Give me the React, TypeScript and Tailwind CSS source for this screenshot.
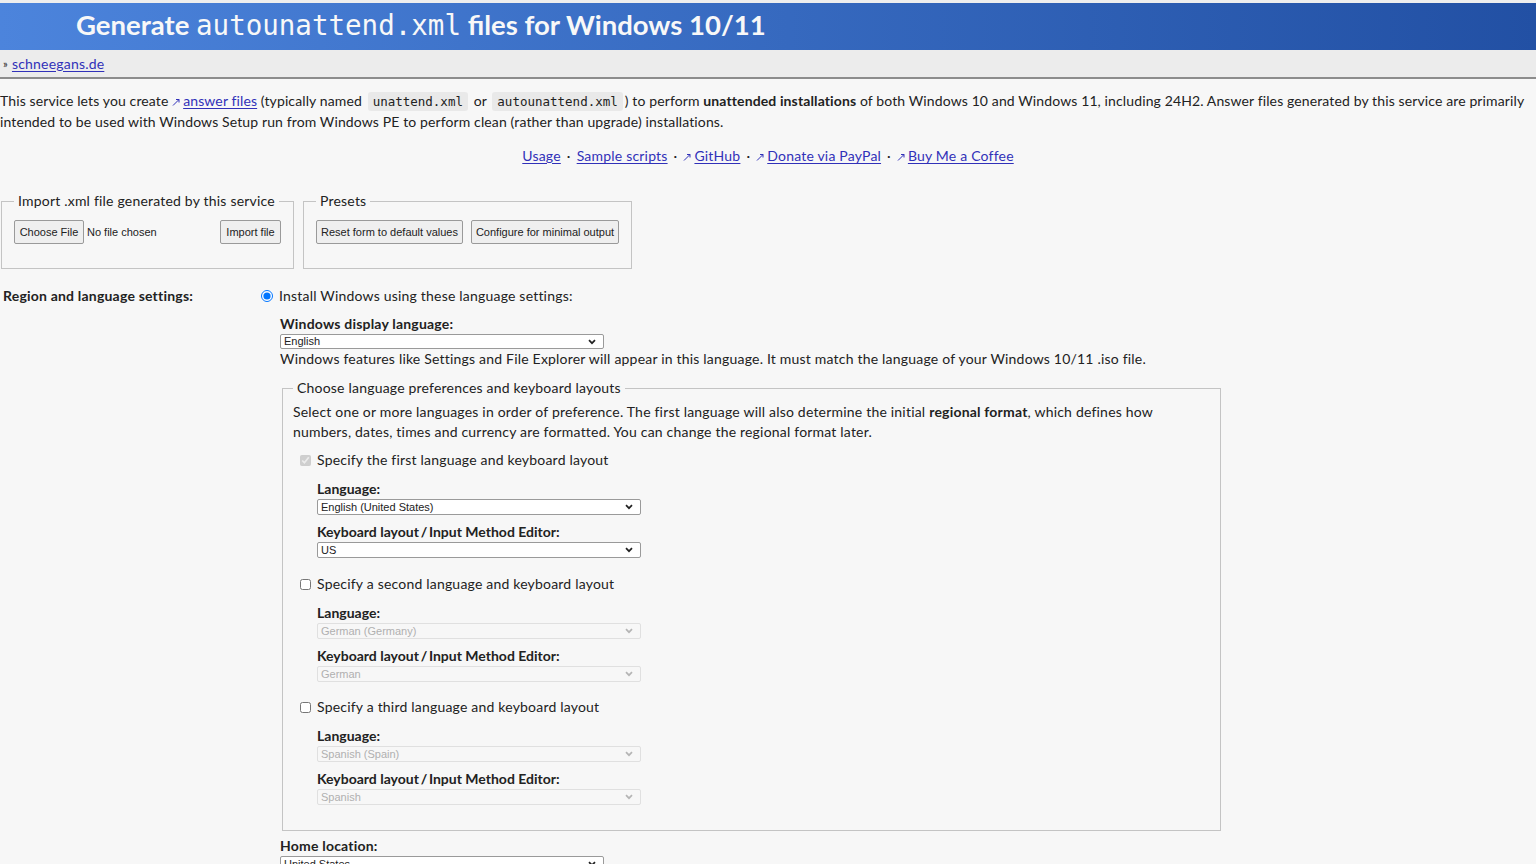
import React from "react";

const LINK = "text-[#3131b9] underline underline-offset-2";

const Ext = () => (
  <svg
    width="8"
    height="8"
    viewBox="0 0 8 8"
    fill="none"
    stroke="currentColor"
    strokeWidth="1"
    className="inline-block mr-[3px] align-baseline"
  >
    <path d="M1 7.5L7 1.5M4 1.5H7V4.5" />
  </svg>
);

const Code = ({ children }: { children: React.ReactNode }) => (
  <code className="mx-[2px] rounded-[3px] bg-[#e9e9e9] px-[5px] py-[2px] font-['DejaVu_Sans_Mono',monospace] text-[12.5px] tracking-normal">
    {children}
  </code>
);

const Btn = ({ children, w }: { children: React.ReactNode; w: string }) => (
  <button
    className={`h-6 ${w} rounded-[2px] border border-[#9a9a9a] bg-[#efefef] font-['Liberation_Sans',Arial,sans-serif] text-[11px] tracking-normal text-[#222]`}
  >
    {children}
  </button>
);

const Select = ({
  value,
  disabled,
  h = "h-4",
}: {
  value: string;
  disabled?: boolean;
  h?: string;
}) => (
  <div
    className={`flex ${h} w-[324px] items-center justify-between rounded-[2px] border pl-[3px] pr-[7px] font-['Liberation_Sans',Arial,sans-serif] text-[11px] leading-none tracking-normal ${
      disabled
        ? "border-[#e0e0e0] bg-[#f7f7f7] text-[#b0b0b0]"
        : "border-[#9a9a9a] bg-white text-[#222]"
    }`}
  >
    <span>{value}</span>
    <svg width="8" height="6" viewBox="0 0 8 6" fill="none">
      <path
        d="M1 1.2L4 4.2L7 1.2"
        stroke={disabled ? "#b5b5b5" : "#222"}
        strokeWidth="1.7"
      />
    </svg>
  </div>
);

const Field = ({
  label,
  value,
  disabled,
  first,
}: {
  label: string;
  value: string;
  disabled?: boolean;
  first?: boolean;
}) => (
  <div className={first ? "mt-[9px]" : "mt-[7px]"}>
    <div className="font-bold leading-5 tracking-normal">{label}</div>
    <Select value={value} disabled={disabled} />
  </div>
);

const LangBlock = ({
  title,
  lang,
  kb,
  checked,
  disabled,
  first,
  mt,
}: {
  title: string;
  lang: string;
  kb: string;
  checked?: boolean;
  disabled?: boolean;
  first?: boolean;
  mt: string;
}) => (
  <div className={mt}>
    <label className="flex items-center pl-[7px] leading-5">
      <input
        type="checkbox"
        defaultChecked={checked}
        disabled={first}
        className="mr-[6px] h-[11px] w-[11px]"
      />
      {title}
    </label>
    <div className="pl-[24px]">
      <Field label="Language:" value={lang} disabled={disabled} first />
      <Field
        label={"Keyboard layout\u2009/\u2009Input Method Editor:"}
        value={kb}
        disabled={disabled}
      />
    </div>
  </div>
);

export default function App() {
  return (
    <div className="min-h-screen bg-[#f7f7f7] font-['Lato','Liberation_Sans',sans-serif] text-[14px] leading-5 tracking-[0.2px] text-[#222]">
      <header className="bg-[#eeeeee] pt-[3px]">
        <div className="flex h-[47px] items-center bg-linear-to-r from-[#4c84dc] to-[#2250a4] pb-[3px] pl-[76px]">
          <h1 className="text-[27.5px] font-bold leading-none tracking-normal text-[#f8f8f8]">
            Generate{" "}
            <span className="font-['DejaVu_Sans_Mono',monospace] font-normal">
              autounattend.xml
            </span>{" "}
            files for Windows 10/11
          </h1>
        </div>
        <div className="flex h-[29px] items-center border-b-2 border-[#8c8c8c] bg-[#ececec] pl-[3px] text-[14px]">
          <span className="mr-[4px] text-[11px]">»</span>
          <a className={LINK}>schneegans.de</a>
        </div>
      </header>

      <p className="mt-3 tracking-[0.12px]">
        <span className="whitespace-nowrap">
          This service lets you create{" "}
          <a className={LINK}>
            <Ext />
            answer files
          </a>{" "}
          (typically named <Code>unattend.xml</Code> or{" "}
          <Code>autounattend.xml</Code>) to perform{" "}
          <b>unattended installations</b> of both Windows 10 and Windows 11,
          including 24H2. Answer files generated by this service are primarily
        </span>
        <br />
        intended to be used with Windows Setup run from Windows PE to perform
        clean (rather than upgrade) installations.
      </p>

      <nav className="mt-[14px] flex justify-center gap-[6px]">
        <a className={LINK}>Usage</a>
        <span>·</span>
        <a className={LINK}>Sample scripts</a>
        <span>·</span>
        <a className={LINK}>
          <Ext />
          GitHub
        </a>
        <span>·</span>
        <a className={LINK}>
          <Ext />
          Donate via PayPal
        </a>
        <span>·</span>
        <a className={LINK}>
          <Ext />
          Buy Me a Coffee
        </a>
      </nav>

      <div className="mt-[25px] flex gap-[9px] pl-px">
        <fieldset className="w-[293px] border border-[#c4c4c4] px-3 pt-[9px] pb-[24px]">
          <legend className="px-[4px]">
            Import .xml file generated by this service
          </legend>
          <div className="flex items-center">
            <Btn w="w-[70px]">Choose File</Btn>
            <span className="ml-[3px] font-['Liberation_Sans',Arial,sans-serif] text-[11px] tracking-normal">
              No file chosen
            </span>
            <span className="ml-auto">
              <Btn w="w-[61px]">Import file</Btn>
            </span>
          </div>
        </fieldset>
        <fieldset className="w-[327px] border border-[#c4c4c4] px-3 pt-[9px] pb-[24px]">
          <legend className="px-[4px]">Presets</legend>
          <div className="flex gap-2">
            <Btn w="w-[147px]">Reset form to default values</Btn>
            <Btn w="w-[148px]">Configure for minimal output</Btn>
          </div>
        </fieldset>
      </div>

      <div className="mt-[17px] flex">
        <div className="w-[261px] shrink-0 pl-[3px] font-bold">
          Region and language settings:
        </div>
        <div>
          <label className="flex items-center">
            <input
              type="radio"
              defaultChecked
              className="mr-[6px] h-[12px] w-[12px]"
            />
            Install Windows using these language settings:
          </label>
          <div className="pl-[19px]">
            <div className="mt-2 font-bold">Windows display language:</div>
            <Select value="English" h="h-[15px]" />
            <div>
              Windows features like Settings and File Explorer will appear in
              this language. It must match the language of your Windows 10/11
              .iso file.
            </div>

            <fieldset className="mt-[9px] ml-[2px] w-[939px] border border-[#c4c4c4] pl-[10px] pr-4 pb-[25px]">
              <legend className="px-[4px]">
                Choose language preferences and keyboard layouts
              </legend>
              <p className="mt-1">
                Select one or more languages in order of preference. The first
                language will also determine the initial{" "}
                <b>regional format</b>, which defines how
                <br />
                numbers, dates, times and currency are formatted. You can change
                the regional format later.
              </p>
              <LangBlock
                first
                checked
                mt="mt-2"
                title="Specify the first language and keyboard layout"
                lang="English (United States)"
                kb="US"
              />
              <LangBlock
                disabled
                mt="mt-4"
                title="Specify a second language and keyboard layout"
                lang="German (Germany)"
                kb="German"
              />
              <LangBlock
                disabled
                mt="mt-[15px]"
                title="Specify a third language and keyboard layout"
                lang="Spanish (Spain)"
                kb="Spanish"
              />
            </fieldset>

            <div className="mt-[5px] font-bold">Home location:</div>
            <Select value="United States" />
          </div>
        </div>
      </div>
    </div>
  );
}
